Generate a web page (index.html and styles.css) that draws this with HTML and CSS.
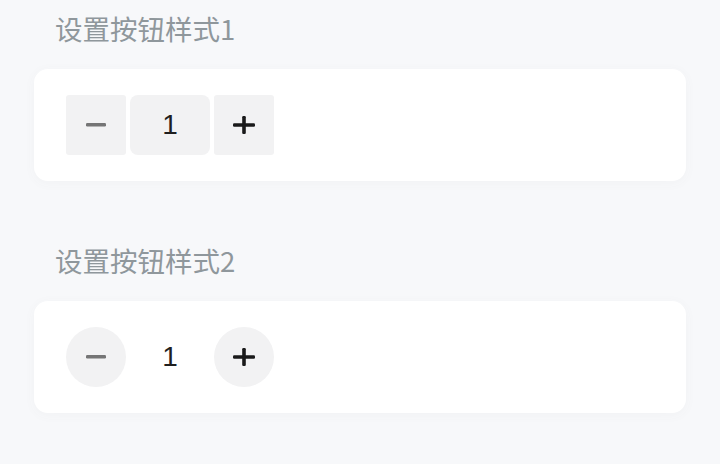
FILE: index.html
```html
<!DOCTYPE html>
<html lang="zh">
<head>
<meta charset="utf-8">
<link rel="stylesheet" href="styles.css">
</head>
<body>
<div class="page">
  <h2 class="title">设置按钮样式1</h2>
  <div class="card">
    <div class="stepper">
      <button class="btn btn-minus"><svg width="20" height="4" viewBox="0 0 20 4"><rect x="0" y="0" width="20" height="3.4" rx="1.2" fill="#757575"/></svg></button>
      <div class="value value-box">1</div>
      <button class="btn btn-plus"><svg width="22" height="22" viewBox="0 0 22 22"><rect x="0" y="9.2" width="22" height="3.6" rx="1.2" fill="#1a1a1a"/><rect x="9.2" y="2" width="3.6" height="18" rx="1.2" fill="#1a1a1a"/></svg></button>
    </div>
  </div>
  <h2 class="title title-2">设置按钮样式2</h2>
  <div class="card">
    <div class="stepper">
      <button class="btn round btn-minus"><svg width="20" height="4" viewBox="0 0 20 4"><rect x="0" y="0" width="20" height="3.4" rx="1.2" fill="#757575"/></svg></button>
      <div class="value">1</div>
      <button class="btn round btn-plus"><svg width="22" height="22" viewBox="0 0 22 22"><rect x="0" y="9.2" width="22" height="3.6" rx="1.2" fill="#1a1a1a"/><rect x="9.2" y="2" width="3.6" height="18" rx="1.2" fill="#1a1a1a"/></svg></button>
    </div>
  </div>
</div>
</body>
</html>
```

FILE: styles.css
```css
html, body {
  margin: 0;
  padding: 0;
  background: #f7f8fa;
  font-family: "Noto Sans CJK SC", "Noto Sans", sans-serif;
}
.page {
  width: 720px;
  height: 464px;
  overflow: hidden;
  padding: 0 34px;
  box-sizing: border-box;
}
.title {
  margin: 0;
  padding: 9px 0 0 21px;
  height: 69px;
  box-sizing: border-box;
  font-size: 27.5px;
  font-weight: 400;
  line-height: 38px;
  color: #8f979c;
}
.title-2 {
  padding-top: 60px;
  height: 120px;
}
.card {
  background: #fff;
  border-radius: 14px;
  height: 112px;
  padding: 26px 32px;
  box-sizing: border-box;
  box-shadow: 0 2px 12px rgba(100, 101, 102, 0.04);
}
.stepper {
  display: flex;
  gap: 4px;
}
.btn {
  width: 60px;
  height: 60px;
  border: 0;
  padding: 0;
  margin: 0;
  background: #f2f2f3;
  border-radius: 3px;
  display: flex;
  align-items: center;
  justify-content: center;
}
.btn.round {
  border-radius: 50%;
}
.value {
  width: 80px;
  height: 60px;
  display: flex;
  align-items: center;
  justify-content: center;
  font-family: "Liberation Sans", "Noto Sans", sans-serif;
  font-size: 28px;
  color: #1f1f1f;
}
.value-box {
  background: #f2f2f3;
  border-radius: 8px;
}
```
